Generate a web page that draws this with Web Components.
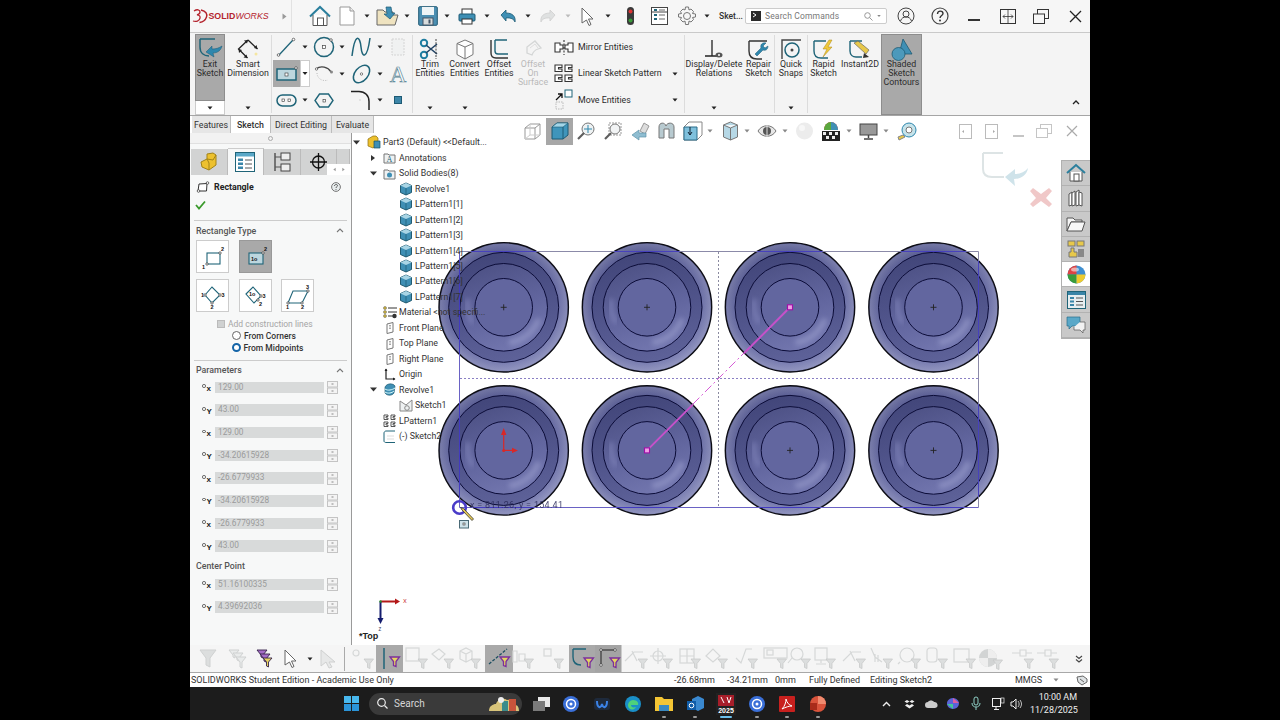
<!DOCTYPE html>
<html lang="en"><head><meta charset="utf-8"><title>SOLIDWORKS</title>
<style>html,body{margin:0;padding:0;background:#000;height:720px;overflow:hidden}</style></head>
<body><sw-app></sw-app>
<script>
const T='#1f6478',B='#3f8fb4',L='#a9d5e5',G='#7a7a7a',F='#c9cbcb';
const funnel=(x,y,c='#dcdede',s='#c4c6c6')=>`<path transform="translate(${x} ${y})" d="M0 0h9.5L6 4.5v5L3.5 8.5V4.5z" fill="${c}" stroke="${s}" stroke-width=".7"/>`;
const pf=(x,y)=>`<path transform="translate(${x} ${y})" d="M0 0h9.5L6 4.5v5L3.5 8.5V4.5z" fill="#e6d460" stroke="#7c2f9c" stroke-width="1.3"/>`;
const fg=(g)=>[26,24,`<g fill="none" stroke="#d6d8d8" stroke-width="1.2">${g}</g>`+funnel(14,12)];
const corner=`<path d="M2 2h17M2 2v12c0 2.5 1.5 4 4 4h3" fill="none" stroke="${T}" stroke-width="1.5"/>`;
const cube=(s=1)=>`<g transform="scale(${s})"><path d="M7 1l5.500 2.500v7L7 13l-5.500-2.500v-7z" fill="${B}" stroke="#155066" stroke-width=".9"/><path d="M1.500 3.500L7 6l5.500-2.500L7 1z" fill="${L}"/><path d="M7 6v7" stroke="#155066" stroke-width=".6"/></g>`;
const plane=`<path d="M4 3l6-1.500v9.500l-6 1.500z" fill="#fff" stroke="#777"/><path d="M7 4v5" stroke="#555" stroke-dasharray="1.500 1"/>`;
const num=(x,y,n)=>`<text x="${x}" y="${y}" font-family="Liberation Sans" font-weight="700" font-size="5.500" fill="#111">${n}</text>`;
const I={
dd:[6,4,'<path d="M.5.500h5L3 3.500z" fill="#222"/>'],
ddf:[6,4,'<path d="M.5.500h5L3 3.500z" fill="#bbb"/>'],
ddw:[6,4,'<path d="M.5.500h5L3 3.500z" fill="#888"/>'],
arr:[5,7,'<path d="M.5.500l4 3-4 3z" fill="#999"/>'],
logo:[16,16,`<path d="M2 3c3-2 6-1.500 6 1 0 1.600-1.400 2.400-3 2.800 2.300.2 3.500 1.400 3 3.400C7.500 13 4 14 1 13" fill="none" stroke="#b4232d" stroke-width="1.300"/><path d="M9 2c5 1 6.500 4 5.500 7s-3.500 5-7 5.500" fill="none" stroke="#b4232d" stroke-width="1.400"/>`],
home:[22,22,`<path d="M1 11.500L11 2l10 9.500" fill="none" stroke="#2b7f9d" stroke-width="2"/><path d="M4 10v10.500h14V10" fill="#fff" stroke="#555"/><rect x="8.500" y="13" width="6" height="7.500" fill="#fff" stroke="#555"/>`],
file:[16,20,`<path d="M1 1h10l4 4v14H1z" fill="#fff" stroke="#999"/><path d="M11 1v4h4" fill="#eee" stroke="#999"/>`],
open:[22,20,`<path d="M1 4h6l2 2h8v3L22 9l-3 10H1z" fill="#efe3c0" stroke="#666"/><path d="M10 1h5l1 6h3l-5 6-6-5h3z" fill="${B}" stroke="#1d5a74" stroke-width=".7"/>`],
save:[20,20,`<rect x=".7" y=".7" width="18.600" height="18.600" rx="1" fill="#4c8fb2" stroke="#225a75"/><rect x="4" y="1" width="12" height="8" fill="#eef4f6"/><rect x="5" y="12" width="10" height="7" fill="#d8dcdc" stroke="#456"/><rect x="10.500" y="13.500" width="2" height="4" fill="#456"/>`],
print:[18,17,`<rect x="4" y="1" width="10" height="6" fill="#fff" stroke="#333"/><rect x="1" y="6" width="16" height="7" rx="1" fill="#3f8fb4" stroke="#1d5a74"/><rect x="4" y="11" width="10" height="5" fill="#fff" stroke="#333"/>`],
undo:[18,14,`<path d="M2 6l5-5v3c6 0 10 3 9 9-1-3-4-4.500-9-4v3z" fill="#3f8fb4" stroke="#1d5a74" stroke-width=".8"/>`],
redo:[18,14,`<path d="M16 6l-5-5v3C5 4 1 7 2 13c1-3 4-4.500 9-4v3z" fill="#dfe1e1" stroke="#cfcfcf" stroke-width=".8"/>`],
cursor:[13,19,`<path d="M1 1l11 11H7.500l2.500 5.500-2 1L5.500 13 1 16z" fill="#fff" stroke="#666"/>`],
cursorf:[18,20,`<path d="M2 1l14 12H10l3 5-3 1-3-6-5 4z" fill="#e7e8e8" stroke="#cfd0d0"/>`],
traffic:[7,18,`<rect width="7" height="18" rx="3.500" fill="#3a3a3a"/><circle cx="3.500" cy="4.500" r="2" fill="#d33"/><circle cx="3.500" cy="13.500" r="2" fill="#3a9c3a"/>`],
opts:[17,18,`<rect x=".5" y=".5" width="16" height="17" fill="#fff" stroke="#444"/><path d="M1 5h15" stroke="#444"/><g fill="${T}"><rect x="3" y="2" width="3" height="2"/><rect x="3" y="7" width="3" height="2"/><rect x="3" y="11" width="3" height="2"/></g><path d="M8 3h6M8 8h6M8 12h6" stroke="#666"/>`],
gear:[20,20,`<circle cx="10" cy="10" r="3.500" fill="none" stroke="#777"/><path d="M8.500 1h3l.5 3 2-1 2.500 2.500-1 2 3 .5v3l-3 .5 1 2L14 16l-2-1-.5 3.500h-3L8 15l-2 1-2.500-2.500 1-2-3-.5V8l3-.5-1-2L6 3l2 1z" fill="none" stroke="#777"/>`],
term:[10,10,`<rect width="10" height="10" fill="#2a2a2a"/><path d="M2 2l3 2-3 2" fill="none" stroke="#fff"/>`],
mag:[9,9,`<circle cx="3.500" cy="3.500" r="2.800" fill="none" stroke="#999"/><path d="M5.500 5.500L8.500 8.500" stroke="#999"/>`],
user:[18,18,`<circle cx="9" cy="9" r="8" fill="none" stroke="#444"/><circle cx="9" cy="7" r="3" fill="none" stroke="#444"/><path d="M3.500 14c1-3 3-4 5.500-4s4.500 1 5.500 4" fill="none" stroke="#444"/>`],
help:[18,18,`<circle cx="9" cy="9" r="8" fill="none" stroke="#444" stroke-width="1.200"/><path d="M6.500 7c0-4 5.500-3.500 5.500-.500 0 2-3 2-3 4.500" fill="none" stroke="#333" stroke-width="1.400"/><circle cx="9" cy="13.500" r="1" fill="#333"/>`],
min:[12,3,`<rect width="12" height="2" fill="#333"/>`],
tile:[16,15,`<rect x=".5" y=".5" width="15" height="14" fill="none" stroke="#333"/><path d="M3 7.500h10M3 7.500l2-2M3 7.500l2 2M13 7.500l-2-2M13 7.500l-2 2M8 .5v14" stroke="#333" stroke-width=".8" fill="none"/>`],
rest:[16,15,`<rect x="4.500" y=".5" width="11" height="9" fill="none" stroke="#333"/><rect x=".5" y="5" width="11" height="9.500" fill="#f6f6f6" stroke="#333"/>`],
close:[13,13,`<path d="M1 1l11 11M12 1L1 12" stroke="#222" stroke-width="1.300"/>`],
exit:[25,24,`<path d="M2 2h15M2 2v8c0 6 4 9 9 9" fill="none" stroke="${T}" stroke-width="1.500"/><path d="M24 9c-1 4-4 7-9 7l1 4-8-5 6-6v3c4 0 7-1 10-3z" fill="#2f87ad" stroke="#1d5a74" stroke-width=".5"/>`],
smart:[24,22,`<path d="M12 2L2.500 11l9 9M12 2l9.500 9" fill="none" stroke="#222" stroke-width="1.300"/><path d="M12 2l-4 .5 3 3zM2.500 11l.5 4 3-3zM11.500 20l-4-.5 3-3zM21.500 11l-1-4-2.500 3z" fill="#222"/><circle cx="20" cy="16" r="1.500" fill="#f5e6a0"/>`],
line:[20,20,`<path d="M3 18L17 3" stroke="${T}" stroke-width="1.300"/><circle cx="2.500" cy="18" r="1.300" fill="#fff" stroke="#444" stroke-width=".7"/><circle cx="17.500" cy="2.500" r="1.300" fill="#fff" stroke="#444" stroke-width=".7"/>`],
circ:[22,22,`<circle cx="11" cy="11" r="9.500" fill="none" stroke="${T}" stroke-width="1.500"/><rect x="9.500" y="9.500" width="3" height="3" fill="#fff" stroke="#444" stroke-width=".7"/><circle cx="18" cy="4" r="1.300" fill="#fff" stroke="#444" stroke-width=".7"/>`],
spline:[20,19,`<path d="M1 18C4-6 9-2 10 9c1 11 6 13 9-9" fill="none" stroke="${T}" stroke-width="1.500"/>`],
ghost:[14,18,`<rect x="1" y="1" width="12" height="16" fill="#f0f1f1" stroke="#ccc" stroke-dasharray="2 1"/>`],
rectsel:[27,27,`<rect width="27" height="27" fill="#a9a9a9"/><rect x="4" y="9" width="19" height="11" fill="#bcd6de" stroke="${T}" stroke-width="1.500"/><rect x="12" y="13" width="3" height="3" fill="#fff" stroke="#333" stroke-width=".6"/><circle cx="23" cy="8" r="1.300" fill="#fff" stroke="#333" stroke-width=".6"/>`],
rectdd:[10,27,`<rect x=".5" y=".5" width="9" height="26" fill="#fff" stroke="#ccc"/><path d="M2.500 12h5L5 15z" fill="#222"/>`],
arc:[19,18,`<path d="M1 4C6 0 13 2 16 7" fill="none" stroke="#444" stroke-width="1.300"/><path d="M2 8c0 5 5 9 11 7" fill="none" stroke="#bbb" stroke-dasharray="1 1.500"/><circle cx="1.500" cy="4" r="1.200" fill="#fff" stroke="#333" stroke-width=".6"/><circle cx="16.500" cy="7" r="1.500" fill="#888"/>`],
ell:[21,20,`<ellipse cx="10.500" cy="10" rx="6.500" ry="10" transform="rotate(40 10.500 10)" fill="none" stroke="${T}" stroke-width="1.500"/><circle cx="10.500" cy="10" r="1.200" fill="#fff" stroke="#333" stroke-width=".6"/>`],
atext:[20,20,`<text x="10" y="18" text-anchor="middle" font-family="Liberation Serif" font-size="23" fill="#fff" stroke="#5c8797" stroke-width=".7">A</text>`],
slot:[21,13,`<rect x="1" y="1" width="19" height="11" rx="5.500" fill="none" stroke="${T}" stroke-width="1.500"/><rect x="6" y="5" width="2.500" height="2.500" fill="#fff" stroke="#333" stroke-width=".6"/><rect x="12" y="5" width="2.500" height="2.500" fill="#fff" stroke="#333" stroke-width=".6"/>`],
poly:[20,15,`<path d="M5.500 1h9l4.500 6.500-4.500 6.500h-9L1 7.500z" fill="none" stroke="${T}" stroke-width="1.400"/><rect x="9" y="6.500" width="2.500" height="2.500" fill="#fff" stroke="#333" stroke-width=".6"/>`],
fillet:[20,20,`<path d="M0 1.500h8c6 0 10 4 10 10V20" fill="none" stroke="#222" stroke-width="1.500"/><circle cx="9" cy="10" r=".8" fill="#ccc"/>`],
point:[8,8,`<rect x=".5" y=".5" width="7" height="7" fill="#3d86a8" stroke="#1d5a74"/>`],
trim:[22,22,`<circle cx="5" cy="5" r="3.200" fill="none" stroke="#1f7da0" stroke-width="2"/><circle cx="5" cy="17" r="3.200" fill="none" stroke="#1f7da0" stroke-width="2"/><path d="M7 7l11 9M7 15l11-9" stroke="#246" stroke-width="1.600"/><path d="M17 1v20" stroke="#444" stroke-dasharray="2 1.200"/>`],
conv:[20,21,`<path d="M10 1l8 3.500v11L10 20l-8-4.500v-11z" fill="#fff" stroke="#777"/><path d="M2 4.500L10 8l8-3.500M10 8v12" fill="none" stroke="#777"/>`],
offset:[20,20,`<path d="M2 1v13c0 3 2 5 5 5h12" fill="none" stroke="#333" stroke-width="1.400"/><path d="M6 1h12M6 1v11c0 2 1 3 3 3h10" fill="none" stroke="#1f6478" stroke-width="1.400"/>`],
offsurf:[18,19,`<path d="M3 7l8-6 6 7-3 1c-3 1-5 3-6 6L3 13z" fill="none" stroke="#d4d6d6" stroke-width="1.300"/><path d="M6 8l5-4 3 4" fill="none" stroke="#ddd"/>`],
mirror:[20,15,`<path d="M1 3h5v2h3v4H6v3H1z" fill="#fff" stroke="#333" stroke-width="1.100"/><path d="M19 3h-5v2h-3v4h3v3h5z" fill="#fff" stroke="#333" stroke-width="1.100"/><path d="M10 0v15" stroke="#222" stroke-dasharray="2 1.500"/>`],
lpat:[20,19,`<g fill="#fff" stroke="#333" stroke-width="1.100"><path d="M1 1h7v2.500H4.500V5H8v2.500H1z"/><path d="M11 1h7v2.500h-3.500V5H18v2.500h-7z"/><path d="M1 11h7v2.500H4.500V15H8v2.500H1z"/><path d="M11 11h7v2.500h-3.500V15H18v2.500h-7z"/></g>`],
move:[18,22,`<rect x="10" y="1" width="7" height="7" fill="#fff" stroke="${T}"/><path d="M1 11l6-6M3 5h4v4" fill="none" stroke="#111" stroke-width="1.300"/><rect x="1" y="13" width="7" height="7" fill="none" stroke="#bbb" stroke-dasharray="1.500 1"/>`],
disp:[20,20,`<path d="M8 1v16M1 17h16" stroke="#222" stroke-width="1.300"/><ellipse cx="15" cy="16" rx="3.500" ry="2.500" fill="#555"/><circle cx="15" cy="16" r="1" fill="#fff"/>`],
repair:[21,21,`<path d="M1 2h18M1 2v10c0 5 3 8 8 8h5" fill="none" stroke="#333" stroke-width="1.400"/><path d="M18 4l-3 3 2 2 3-2c0 4-3 5-5 4l-6 6-2-2 6-6c-1-3 1-6 5-5z" fill="#2f87ad" stroke="#1d5a74" stroke-width=".5"/>`],
snaps:[21,21,`<path d="M1 20V1h19" fill="none" stroke="#444" stroke-width="1.400"/><circle cx="11" cy="11" r="7" fill="none" stroke="${T}" stroke-width="1.500"/><circle cx="11" cy="11" r="1.500" fill="#444"/>`],
rapid:[21,21,`<path d="M1 2h12M1 2v10c0 5 3 7 7 7h7" fill="none" stroke="${T}" stroke-width="1.400"/><path d="M16 1l-6 9h4l-4 8 9-10h-4l4-7z" fill="#efc93a" stroke="#a9871b" stroke-width=".5"/>`],
i2d:[22,20,`<path d="M1 2h12M1 2v10c0 4 3 6 6 6h6" fill="none" stroke="${T}" stroke-width="1.400"/><path d="M5 4l4-2 11 9-3 4z" fill="#e7c84a" stroke="#555" stroke-width=".6"/><path d="M15 14l5 4-6 1z" fill="#333"/>`],
shaded:[22,23,`<path d="M12 1l9 15H8z" fill="#3f8fb4" stroke="#1d5a74" stroke-width=".8"/><circle cx="7.500" cy="16" r="6.500" fill="#4c99bb" stroke="#1d5a74" stroke-width=".8"/>`],
up:[8,5,`<path d="M1 4l3-3 3 3" fill="none" stroke="#222" stroke-width="1.300"/>`],
upg:[8,5,`<path d="M1 4l3-3 3 3" fill="none" stroke="#777" stroke-width="1.100"/>`],
wire:[17,17,`<path d="M1 5l5-4h10v11l-5 4H1zM1 5h10v11M11 5l5-4" fill="none" stroke="#999"/><path d="M1 16l5-4h10M6 1v11" fill="none" stroke="#ccc"/>`],
shadedcube:[27,27,`<rect width="27" height="27" fill="#a7a7a7"/><path d="M6 9l5-4h11v12l-5 4H6z" fill="#3f95bb" stroke="#1d5a74"/><path d="M6 9h11l5-4H11z" fill="#a4d6e8" stroke="#1d5a74" stroke-width=".6"/><path d="M17 9v12" stroke="#1d5a74"/>`],
zfit:[18,18,`<circle cx="11" cy="7" r="6" fill="#eef2f3" stroke="#777"/><path d="M7 11l-6 6" stroke="#5e5e5e" stroke-width="2.200"/><path d="M11 3v8M7 7h8" stroke="#2f87ad"/>`],
zarea:[18,18,`<rect x="5" y="1" width="12" height="12" fill="none" stroke="#999" stroke-dasharray="2 1"/><circle cx="11" cy="7" r="5" fill="#f2f4f5" stroke="#777"/><path d="M7 11l-6 6" stroke="#5e5e5e" stroke-width="2.200"/>`],
prev:[19,18,`<path d="M13 1l5 3-4 8-5-3z" fill="#ddd" stroke="#999"/><path d="M1 13l7-5v3h7v4H8v3z" fill="#8fbdd1" stroke="#5e93a9" stroke-width=".7"/>`],
sect:[19,18,`<path d="M2 16V5c0-5 6-5 7-1 1-4 8-4 8 1v11h-5V7H7v9z" fill="#b8cad0" stroke="#777"/>`],
vorient:[20,20,`<path d="M1 6l5-5h13v13l-5 5H1z" fill="#fff" stroke="#888"/><path d="M1 6h13v13H1z" fill="#7fc0dc" stroke="#2a6d8a"/><path d="M7 6v8M5 11l2 3 2-3" fill="none" stroke="#123"/>`],
dstyle:[17,20,`<path d="M8.500 1l7 3v12l-7 3-7-3V4z" fill="#b6d8e6" stroke="#777"/><path d="M8.500 7v12M1.500 4l7 3 7-3" fill="#eef6fa" stroke="#777"/>`],
eye:[20,14,`<path d="M1 7c4-7 14-7 18 0-4 7-14 7-18 0z" fill="#e7e7e7" stroke="#777"/><circle cx="10" cy="7" r="4" fill="#555"/><path d="M10 1v12" stroke="#ddd"/>`],
ball:[19,20,`<circle cx="9.500" cy="10" r="8.500" fill="#ececec"/><circle cx="7" cy="7" r="3" fill="#f7f7f7"/>`],
appear:[20,21,`<path d="M3 9a7 8 0 0 1 14 0z" fill="#d44"/><path d="M10 1a7 8 0 0 1 7 8h-7z" fill="#3f8fb4"/><path d="M3 9a7 8 0 0 1 7-8v8z" fill="#5aa83f"/><g fill="#222"><rect x="1" y="10" width="18" height="10"/></g><g fill="#eee"><rect x="2" y="11" width="3" height="3"/><rect x="8" y="11" width="3" height="3"/><rect x="14" y="11" width="3" height="3"/><rect x="5" y="15" width="3" height="3"/><rect x="11" y="15" width="3" height="3"/></g>`],
mon:[19,17,`<rect x="1" y="1" width="17" height="11" fill="#999" stroke="#444"/><path d="M9.500 12v3M5 16h9" stroke="#444" stroke-width="1.500"/>`],
tape:[20,20,`<circle cx="12" cy="9" r="7" fill="#c6e3ea" stroke="#2f87ad"/><circle cx="12" cy="9" r="3" fill="#fff" stroke="#777"/><path d="M6 14l-5 2 1 3 6-3z" fill="#e7c84a" stroke="#888"/>`],
wl:[13,15,`<rect x=".5" y=".5" width="12" height="14" fill="#fff" stroke="#bbb"/><path d="M3 7.500l2-1.500v3z" fill="#aaa"/>`],
wr:[13,15,`<rect x=".5" y=".5" width="12" height="14" fill="#fff" stroke="#bbb"/><path d="M10 7.500l-2-1.500v3z" fill="#aaa"/>`],
wm:[11,2,`<rect width="11" height="2" fill="#c5c5c5"/>`],
wrest:[16,14,`<rect x="4.500" y=".5" width="11" height="9" fill="none" stroke="#c5c5c5"/><rect x=".5" y="4.500" width="11" height="9" fill="#fff" stroke="#c5c5c5"/>`],
wclose:[12,12,`<path d="M1 1l10 10M11 1L1 11" stroke="#aaa" stroke-width="1.200"/>`],
tpart:[20,20,`<path d="M2 10l6-3V2l6-1 3 2v10l-7 5-7-3z" fill="#edc12e" stroke="#a28318"/><path d="M8 7l6 1 3-5M8 7l2 4v7" fill="none" stroke="#a28318"/>`],
tpm:[20,20,`<rect x=".5" y=".5" width="19" height="19" fill="#fff" stroke="#1f6478"/><rect x="1" y="1" width="18" height="3.500" fill="#5aa8c8"/><g fill="#3a85a8"><rect x="3" y="6.500" width="5" height="2.500"/><rect x="3" y="10.500" width="5" height="2.500"/><rect x="3" y="14.500" width="5" height="2.500"/></g><path d="M10 8h7M10 12h7M10 16h7" stroke="#555"/>`],
tcfg:[19,20,`<path d="M3 1v18" stroke="#555" stroke-width="1.500"/><path d="M3 5h6M3 15h6" stroke="#555" stroke-width="1.200"/><rect x="9" y="1" width="9" height="7" fill="#eee" stroke="#444"/><rect x="9" y="12" width="9" height="7" fill="#eee" stroke="#444"/>`],
tdim:[17,18,`<circle cx="8.500" cy="9" r="6" fill="none" stroke="#111" stroke-width="1.300"/><path d="M8.500 0v18M0 9h17" stroke="#111" stroke-width="1.300"/>`],
trect:[12,12,`<path d="M2 3l8-.5-.5 7.500H1z" fill="#fff" stroke="#333"/><circle cx="10.500" cy="2" r="1.300" fill="#fff" stroke="#333" stroke-width=".7"/><circle cx="1.500" cy="10" r="1.300" fill="#fff" stroke="#333" stroke-width=".7"/>`],
qhelp:[10,10,`<circle cx="5" cy="5" r="4.400" fill="#e7eced" stroke="#777"/><path d="M3.500 4c0-2 3-2 3-.3 0 1-1.500 1-1.500 2.300M5 7.200v.8" fill="none" stroke="#555"/>`],
check:[11,10,`<path d="M1 5l3 3.500L10 1.500" fill="none" stroke="#3a9a2c" stroke-width="1.800"/>`],
rt1:[24,24,`<rect x="6" y="8" width="13" height="11" fill="none" stroke="${T}" stroke-width="1.100"/><circle cx="6" cy="19" r="1.200" fill="#fff" stroke="#333" stroke-width=".7"/><circle cx="19" cy="8" r="1.200" fill="#fff" stroke="#333" stroke-width=".7"/>`+num(1,24,1)+num(20,6,2)],
rt2:[24,24,`<rect x="6" y="8" width="14" height="11" fill="#bcd6de" stroke="${T}" stroke-width="1.100"/><circle cx="20" cy="8" r="1.200" fill="#fff" stroke="#333" stroke-width=".7"/>`+num(8,16,'1o')+num(21,6,2)],
rt3:[24,24,`<path d="M4 11l7-8 8 8-8 8z" fill="none" stroke="${T}" stroke-width="1.100"/><circle cx="4" cy="11" r="1.200" fill="#fff" stroke="#333" stroke-width=".7"/><circle cx="19" cy="11" r="1.200" fill="#fff" stroke="#333" stroke-width=".7"/><circle cx="11" cy="19" r="1.200" fill="#fff" stroke="#333" stroke-width=".7"/>`+num(0,13,1)+num(20.500,13,3)+num(9.500,25,2)],
rt4:[24,24,`<path d="M3 10l7-7 8 9-7 7z" fill="none" stroke="${T}" stroke-width="1.100"/><circle cx="18" cy="12" r="1.200" fill="#fff" stroke="#333" stroke-width=".7"/><circle cx="15" cy="16" r="1.200" fill="#fff" stroke="#333" stroke-width=".7"/>`+num(6,12,'1o')+num(19.500,14,3)+num(16,22,2)],
rt5:[24,24,`<path d="M2 19L7 7h15l-6 12z" fill="none" stroke="${T}" stroke-width="1.100"/><circle cx="2" cy="19" r="1.200" fill="#fff" stroke="#333" stroke-width=".7"/><circle cx="16" cy="19" r="1.200" fill="#fff" stroke="#333" stroke-width=".7"/><circle cx="22" cy="7" r="1.200" fill="#fff" stroke="#333" stroke-width=".7"/>`+num(0,25,1)+num(15,25,2)+num(20,5,3)],
spin:[11,13,`<rect x=".5" y=".5" width="10" height="5.500" fill="#f4f4f4" stroke="#c4c4c4"/><rect x=".5" y="7" width="10" height="5.500" fill="#f4f4f4" stroke="#c4c4c4"/><path d="M4.500 3h2M4.500 10h2" stroke="#888"/>`],
tann:[13,13,`<path d="M1 3h4l1 1h6v8H1z" fill="#eef1f2" stroke="#777"/><text x="6.500" y="11" text-anchor="middle" font-family="Liberation Serif" font-size="8" fill="${T}">A</text>`],
tbod:[13,13,`<path d="M1 3h4l1 1h6v8H1z" fill="#eef1f2" stroke="#777"/><circle cx="6.500" cy="8" r="2.500" fill="${B}"/>`],
tcube:[13,14,cube()],
tpart3:[14,14,`<path d="M1 4l5-3h3l2 2v7l-5 3-5-2z" fill="#edc12e" stroke="#8c6f12" stroke-width=".7"/><path d="M7 6h6v7H7z" fill="${B}" stroke="#155066" stroke-width=".7"/>`],
tmat:[15,13,`<path d="M5 2h9M5 6h9M5 10h5" stroke="#333"/><g fill="#cdb33a" stroke="#555" stroke-width=".5"><circle cx="2" cy="2" r="1.500"/><circle cx="2" cy="6" r="1.500"/><circle cx="2" cy="10" r="1.500"/></g><circle cx="11.500" cy="10" r="2.200" fill="#333"/>`],
tplane:[13,13,plane],
torig:[13,13,`<path d="M3 1v10h9" fill="none" stroke="#222" stroke-width="1.200"/><path d="M1.500 3L3 .5 4.500 3zM10 9.500l2.500 1.500L10 12.500z" fill="#222"/>`],
trev:[13,13,`<path d="M2 4c2-4 8-4 10-1l-1 7c-2 3-7 3-9 0z" fill="#3f8fb4" stroke="#155066" stroke-width=".6"/><path d="M2 6c3 2 7 1 10-1M2 9c3 2 7 1 9-1" stroke="#dff" fill="none"/>`],
tsk:[14,13,`<path d="M1 2l6 4 6-5v11H1z" fill="#eef1f2" stroke="#888"/><circle cx="8" cy="9" r="2.300" fill="none" stroke="#888"/>`],
tlp:[14,13,`<g fill="#fff" stroke="#444" stroke-width=".9"><path d="M1 1h4v1.500H3V4h2v1.500H1z"/><path d="M8 1h4v1.500h-2V4h2v1.500H8z"/><path d="M1 8h4v1.500H3V11h2v1.500H1z"/><path d="M8 8h4v1.500h-2V11h2v1.500H8z"/></g>`],
tsk2:[13,13,`<path d="M12 1H3c-1 0-2 1-2 2v8c0 1 1 1.500 2 1.500h9" fill="#fff" stroke="#1f6478"/><path d="M4 6h7M4 9h7" stroke="#ddd"/>`],
exparr:[6,6,`<path d="M1 0l4 3-4 3z" fill="#333"/>`],
expdn:[7,5,`<path d="M0 .5h7L3.500 4.500z" fill="#333"/>`],
pHome:[20,20,`<path d="M1 10L10 2l9 8" fill="none" stroke="#2b7f9d" stroke-width="2"/><path d="M4 9v9h12V9" fill="#fff" stroke="#555"/><rect x="8" y="11" width="5" height="7" fill="#fff" stroke="#555"/>`],
pLib:[18,18,`<g fill="#fff" stroke="#555"><path d="M2 5l3-2v13l-3 1z"/><path d="M5 4l3-2v14l-3 1z"/><path d="M9 3l3-2v15l-3 1z"/><path d="M12 3l3 1v13l-3-1z"/></g>`],
pFold:[20,16,`<path d="M1 2h6l2 2h7v2H5L1 15z" fill="#f5f5f5" stroke="#555"/><path d="M5 6h14l-3 9H1z" fill="#f7f7f7" stroke="#555"/>`],
pVP:[18,18,`<rect x="1" y="1" width="7" height="5" fill="#e7c84a" stroke="#777"/><rect x="10" y="1" width="7" height="5" fill="#e7c84a" stroke="#777"/><path d="M4 8h3v4h3v5H2v-5h2z" fill="#e7c84a" stroke="#777"/><rect x="11" y="9" width="6" height="8" fill="#888"/>`],
pApp:[19,19,`<circle cx="9.500" cy="9.500" r="9" fill="#3f8fd0"/><path d="M9.500.5a9 9 0 0 0-9 9h9z" fill="#d44"/><path d="M.5 9.500a9 9 0 0 0 9 9v-9z" fill="#3a9c3a"/><path d="M9.500 9.500h9a9 9 0 0 1-9 9z" fill="#eecb2e"/><ellipse cx="8" cy="4.500" rx="4" ry="2" fill="#fff" opacity=".55"/>`],
pCP:[19,18,`<rect x=".5" y=".5" width="18" height="17" fill="#e7eef0" stroke="#1f6478"/><rect x="1" y="1" width="17" height="3" fill="#3a85a8"/><g fill="#3a85a8"><rect x="3" y="6" width="4" height="2"/><rect x="3" y="9.500" width="4" height="2"/><rect x="3" y="13" width="4" height="2"/></g><path d="M9 7h7M9 10.500h7M9 14h7" stroke="#555"/>`],
pChat:[20,18,`<path d="M1 1h13v9H6l-3 3v-3H1z" fill="#5aa8c8" stroke="#2a6d8a" stroke-width=".7"/><path d="M14 6h5v8h-2v3l-3-3H8v-3" fill="#f2f2f2" stroke="#555" stroke-width=".7"/>`],
ffun1:[19,20,`<path d="M1 1h16l-6 8v9l-4-2V9z" fill="#dcdede" stroke="#cfd1d1"/>`],
ffun2:[19,20,`<g fill="#e9ebeb" stroke="#cfd1d1"><path d="M1 1h10L7 6v3L5 8V6z"/><path d="M5 4h10l-4 5v3l-2-1V9z"/><path d="M8 8h10l-4 5v6l-2-1v-5z"/></g>`],
ffun3:[17,19,`<g stroke="#35224a" stroke-width=".9"><path d="M1 1h10L7 6v3L5 8V6z" fill="#a46cc6"/><path d="M4 5h10l-4 5v3l-2-1v-2z" fill="#a46cc6"/><path d="M7 9h9l-3.500 4v5l-2-1v-4z" fill="#e6d460"/></g>`],
fsel1:[27,27,`<rect width="27" height="27" fill="#a9a9a9"/><path d="M8 3v21" stroke="${T}" stroke-width="1.500"/>`+pf(14,12)],
fsel2:[28,27,`<rect width="28" height="27" fill="#a9a9a9"/><path d="M4 19L22 4" stroke="#1c4e60" stroke-width="1.300" stroke-dasharray="3 1.500"/>`+pf(15,12)],
fsel3:[27,27,`<rect width="27" height="27" fill="#a9a9a9"/><path d="M4 4h13M4 4v8c0 5 3 8 8 8" fill="none" stroke="${T}" stroke-width="1.400"/>`+pf(15,13)],
fsel4:[27,27,`<rect width="26.500" height="27" fill="#a4a4a4"/><path d="M6 5h14M6 5v15" fill="none" stroke="#222" stroke-width="1"/><circle cx="6" cy="5" r="1.300" fill="#fff" stroke="#222" stroke-width=".6"/><circle cx="6" cy="20" r="1.300" fill="#fff" stroke="#222" stroke-width=".6"/><circle cx="20" cy="5" r="1.300" fill="#fff" stroke="#222" stroke-width=".6"/>`+pf(15,13)],
sep:[1,24,`<rect width="1" height="24" fill="#aaa"/>`],
chev:[8,8,`<path d="M1 1l3 2.500L7 1M1 4.500L4 7l3-2.500" fill="none" stroke="#444" stroke-width="1.100"/>`],
fstat:[12,11,`<path d="M1 2l6-1 4 3v3l-5 3-4-3z" fill="#dfe3e5" stroke="#666"/><path d="M4 4l4 3" stroke="#666"/>`],
win:[15,15,`<rect width="7" height="7" fill="#48b8ee"/><rect x="8" width="7" height="7" fill="#48b8ee"/><rect y="8" width="7" height="7" fill="#2b94d8"/><rect x="8" y="8" width="7" height="7" fill="#2b94d8"/>`],
smag:[11,11,`<circle cx="4.500" cy="4.500" r="3.800" fill="none" stroke="#eee" stroke-width="1.200"/><path d="M7.500 7.500L10.500 10.500" stroke="#eee" stroke-width="1.200"/>`],
doodle:[32,17,`<path d="M1 16c0-5 4-7 7-7 1-4 7-7 11-4 4-1 8 1 8 5 3 0 4 3 4 6z" fill="#d8c47a"/><rect x="14" y="6" width="6" height="10" fill="#3b8b8b"/><rect x="21" y="4" width="7" height="12" fill="#c9543b"/><circle cx="13" cy="5" r="3" fill="#eee"/>`],
task:[17,14,`<rect x="5" y="0" width="12" height="10" fill="#e8e8e8"/><rect x="0" y="4" width="12" height="10" fill="#7a7a7a"/>`],
t1:[16,16,`<circle cx="8" cy="8" r="8" fill="#3a6fd8"/><circle cx="8" cy="8" r="4.500" fill="none" stroke="#fff" stroke-width="1.500"/><circle cx="8" cy="8" r="1.500" fill="#fff"/>`],
t2:[16,12,`<rect width="16" height="12" rx="3" fill="#1e2a3c"/><path d="M3 3c0 7 4 8 5 3 1 5 5 4 5-3" fill="none" stroke="#3b82e6" stroke-width="2"/>`],
edge:[16,16,`<circle cx="8" cy="8" r="8" fill="#1a8fc8"/><path d="M5 13c-3-2-3-8 3-9 4 0 6 3 5 5H6c0 2 2 3 5 2-2 3-4 3-6 2z" fill="#4ed27b"/>`],
fold:[18,15,`<path d="M0 1h7l2 2h9v12H0z" fill="#f4c534"/><rect x="4" y="9" width="10" height="6" fill="#3a89c0"/>`],
outl:[17,16,`<path d="M5 3l6-3 6 3v9l-6 3-6-3z" fill="#3a89d0"/><rect y="5" width="9" height="9" fill="#0f5ca8"/><circle cx="4.500" cy="9.500" r="2.300" fill="none" stroke="#fff"/>`],
swapp:[20,22,`<rect width="20" height="22" fill="#222"/><rect x="2" y="2" width="16" height="11" fill="#a71e2a"/><text x="10" y="20" text-anchor="middle" font-family="Liberation Sans" font-size="7" font-weight="700" fill="#fff">2025</text><path d="M5 4l3 6M11 4l2 6 2-6" stroke="#fff" fill="none"/>`],
acro:[16,16,`<rect width="16" height="16" rx="1" fill="#c8201e"/><path d="M3 13c3-3 4-7 4-10 1 4 3 6 6 7-3 0-6 1-10 3z" fill="none" stroke="#fff"/>`],
ppt:[16,16,`<circle cx="8" cy="8" r="8" fill="#d9533b"/><path d="M8 8V0a8 8 0 0 1 8 8z" fill="#f08b6f"/><rect y="7" width="7" height="7" fill="#a82b1a"/>`],
caret:[9,6,`<path d="M1 5l3.500-3.500L8 5" fill="none" stroke="#eee" stroke-width="1.400"/>`],
tdb:[11,10,`<path d="M3 1l2.500 1.500L3 4 .5 2.500zM8 1l2.500 1.500L8 4 5.500 2.500zM3 5l2.500 1.500L8 5l2 1.500-4.500 3L1 6.500z" fill="#eee"/>`],
tcl:[12,8,`<path d="M3 8a3 3 0 0 1 0-6c1-2 5-2 6 0a3 3 0 0 1 1 6z" fill="#ccc"/>`],
tms:[12,11,`<path d="M6 0a6 5.500 0 1 1-.1 0z" fill="#5a63d8"/><path d="M6 0l6 5H6z" fill="#dd5f9f"/><path d="M0 6h6v5z" fill="#43c79a"/>`],
tmic:[8,14,`<rect x="2" y="0" width="4" height="8" rx="2" fill="none" stroke="#8fd0c6"/><path d="M0 6c0 3 2 4 4 4s4-1 4-4M4 10v3" fill="none" stroke="#8fd0c6"/>`],
tnet:[12,12,`<rect x=".5" y=".5" width="8" height="8" fill="none" stroke="#eee"/><path d="M4 8.500v3M2 11.500h5" stroke="#eee"/><rect x="9" y="0" width="3" height="5" fill="none" stroke="#eee" stroke-width=".7"/>`],
tvol:[11,10,`<path d="M1 3h2l3-3v10L3 7H1z" fill="none" stroke="#eee"/><path d="M8 2c1.500 2 1.500 4 0 6M10 1c2 3 2 5 0 8" fill="none" stroke="#eee" stroke-width=".8"/>`],
};
const glyph={a:`<circle cx="6" cy="6" r="3"/>`,b:`<rect x="2" y="1" width="13" height="13"/>`,c:`<path d="M2 7l7-5 6 5-6 6z"/>`,d:`<path d="M3 4l6-3 6 3v8l-6 3-6-3zM3 4l6 3 6-3M9 7v8"/>`,e:`<path d="M3 4h4v11H3zM9 7h6v7H9z"/>`,f:`<rect x="4" y="2" width="7" height="7"/>`,g:`<circle cx="9" cy="9" r="5"/><path d="M9 1v16M1 9h16"/>`,h:`<rect x="3" y="2" width="14" height="14"/><path d="M10 2v14M3 9h14"/>`,i:`<path d="M2 9l7-7 7 7-7 6z"/>`,j:`<path d="M2 11l5 5 5-14h6"/>`,k:`<rect x="1" y="1" width="23" height="10"/><rect x="4" y="3" width="6" height="5"/>`,l:`<circle cx="10" cy="7" r="6"/><path d="M5 11l-4 5"/>`,m:`<rect x="3" y="1" width="12" height="12"/><path d="M9 13v3M4 17h10"/>`,n:`<path d="M1 14L10 5h9M8 4l5 10"/>`,o:`<path d="M2 1l4 9 7 5M6 7v8M9 8v7"/>`,p:`<circle cx="10" cy="8" r="7"/><path d="M3 15l-2 2"/>`,q:`<rect x="3" y="1" width="10" height="14" rx="3"/>`,r:`<rect x="2" y="2" width="15" height="13"/>`,s:`<path d="M10 1a8 8 0 1 0 .1 0zM10 1v16M2 9h16"/>`,t:`<path d="M2 6h8M10 3h6v6h-6zM16 6h6"/>`};
for(const k in glyph)I['g'+k]=fg(glyph[k]);
I.gs[2]=`<circle cx="9" cy="11" r="9" fill="#d2d4d4"/><path d="M9 2a9 9 0 0 1 9 9H9zM9 11v9a9 9 0 0 1-9-9z" fill="#eee"/>`+funnel(14,13);

class SwIcon extends HTMLElement{connectedCallback(){if(this.shadowRoot)return;const d=I[this.getAttribute('name')];const r=this.attachShadow({mode:'open'});r.innerHTML=`<style>:host{display:block;flex:none;width:${d[0]}px;height:${d[1]}px}svg{display:block;overflow:visible}</style><svg width="${d[0]}" height="${d[1]}" viewBox="0 0 ${d[0]} ${d[1]}">${d[2]}</svg>`}}
customElements.define('sw-icon',SwIcon);

/* Lays a row out in flow: each item is placed by the gap before it. */
function strip(items,x0){let x=x0,o='';for(const it of items){
 if(it[1][0]==='#'){const [l,,w,html,css='']=it;o+=`<div style="flex:none;margin-left:${(l-x).toFixed(1)}px;width:${w}px;white-space:nowrap;${css}">${html}</div>`;x=l+w;}
 else{const [c,n,op,dy]=it;const w=I[n][0];const l=c-w/2;o+=`<sw-icon name="${n}" style="margin-left:${(l-x).toFixed(1)}px;${op?`opacity:${op};`:''}${dy?`margin-top:${dy}px;`:''}"></sw-icon>`;x=l+w;}
}return o}
const UI='Roboto,"Noto Sans",sans-serif';

class SwTitlebar extends HTMLElement{connectedCallback(){this.attachShadow({mode:'open'}).innerHTML=`<style>:host{display:flex;align-items:center;height:33px;background:#f6f6f6;border-bottom:1px solid #c9c9c9;box-sizing:border-box;font:9px ${UI};color:#333}.lg{font:700 8.800px "Liberation Sans",sans-serif;color:#b4232d}.lg i{font-weight:400}.box{display:flex;align-items:center;height:16px;border:1px solid #ccc;background:#fff;box-sizing:border-box;border-radius:2px;color:#777;font-size:8.500px;letter-spacing:.15px}</style>`+strip([
[200,'logo'],[208.500,'#',62,'<span class="lg">SOLID<i>WORKS</i></span>'],[284,'arr'],[290.500,'#',1,'','height:33px;background:#e2e2e2'],
[320,'home'],[347,'file'],[367,'dd'],[387,'open'],[407,'dd'],[428,'save'],[447,'dd'],[467,'print'],[487,'dd'],[508,'undo'],[528,'dd'],[548,'redo'],[568,'ddf'],[587,'cursor'],[608,'dd'],[630,'traffic'],[659,'opts'],[687,'gear'],[707,'dd'],
[719,'#',22,'Sket...','font-weight:500;font-size:8.500px'],[745,'#',142,`<div class="box"><sw-icon name="term" style="margin:0 4px 0 5px"></sw-icon><span style="flex:1">Search Commands</span><sw-icon name="mag" style="margin-right:3px"></sw-icon><sw-icon name="ddw" style="margin-right:4px;transform:scale(.7)"></sw-icon></div>`],
[906,'user'],[940,'help'],[974,'min',0,8],[1008,'tile'],[1041,'rest'],[1075,'close']],190)}}
customElements.define('sw-titlebar',SwTitlebar);

class SwRbtn extends HTMLElement{connectedCallback(){const g=n=>this.getAttribute(n);const active=this.hasAttribute('active'),fade=this.hasAttribute('faded'),dd=this.hasAttribute('dd');
this.attachShadow({mode:'open'}).innerHTML=`<style>:host{display:flex;flex-direction:column;align-items:center;flex:none;width:${g('w')}px;height:81px;box-sizing:border-box;font:8.800px/9px ${UI};color:${fade?'#b9b9b9':'#2c2c2c'};text-align:center}
.top{display:flex;flex-direction:column;align-items:center;width:100%;height:${g('box')||81}px;box-sizing:border-box;${active?'background:#a9a9a9;border:1px solid #8d8d8d;':''}}.ic{height:22px;margin-top:${active?3:4}px;display:flex;align-items:center;justify-content:center}.lb{margin-top:0}.dd{height:14px;display:flex;align-items:center;justify-content:center;width:100%;box-sizing:border-box;${g('box')&&active?'background:#fff;border:1px solid #ccc;border-top:0':''}}</style>
<div class="top"><div class="ic"><sw-icon name="${g('icon')}"></sw-icon></div><div class="lb"><slot></slot></div></div>${g('box')?`<div class="dd">${dd?'<sw-icon name="dd"></sw-icon>':''}</div>`:''}`}}
customElements.define('sw-rbtn',SwRbtn);

class SwRibbon extends HTMLElement{connectedCallback(){this.attachShadow({mode:'open'}).innerHTML=`<style>:host{display:flex;height:82px;padding-top:1px;box-sizing:border-box;background:#f4f4f4;font:8.800px/9px ${UI};color:#2c2c2c}
.sep{flex:none;width:1px;background:#dcdcdc;height:78px;margin-top:1px}.col{display:flex;flex-direction:column;flex:none}.r{display:flex;align-items:center;height:26.500px}
.lst{width:134px;flex:none}</style>
<div style="width:5px;flex:none"></div>
<sw-rbtn w="30" icon="exit" active box="67" dd>Exit<br>Sketch</sw-rbtn><div style="width:3px;flex:none"></div>
<sw-rbtn w="40" icon="smart" box="67" dd>Smart<br>Dimension</sw-rbtn><div style="width:3px;flex:none"></div><div class="sep"></div>
<div class="col" style="width:140px">
<div class="r">${strip([[286,'line'],[305,'dd'],[323.700,'circ'],[342,'dd'],[361.500,'spline'],[380,'dd'],[398.500,'ghost',.8]],272)}</div>
<div class="r">${strip([[286.500,'rectsel'],[305,'rectdd'],[324,'arc'],[342,'dd'],[361,'ell'],[380,'dd'],[398,'atext']],272)}</div>
<div class="r">${strip([[286,'slot'],[305,'dd'],[323.700,'poly'],[361,'fillet'],[380,'dd'],[398,'point']],272)}</div>
</div><div class="sep"></div>
<sw-rbtn w="34" icon="trim" box="67" dd><u style="text-decoration-thickness:.5px">T</u>rim<br>Entities</sw-rbtn>
<sw-rbtn w="35" icon="conv" box="67" dd>Convert<br>Entities</sw-rbtn>
<sw-rbtn w="34" icon="offset">Offset<br>Entities</sw-rbtn>
<sw-rbtn w="34" icon="offsurf" faded>Offset<br>On<br>Surface</sw-rbtn>
<div class="col lst">
<div class="r">${strip([[563.500,'mirror'],[578,'#',90,'Mirror Entities']],550)}</div>
<div class="r">${strip([[564,'lpat'],[578,'#',90,'Linear Sketch Pattern'],[675,'dd']],550)}</div>
<div class="r">${strip([[564,'move'],[578,'#',90,'Move Entities'],[675,'dd']],550)}</div>
</div><div class="sep"></div>
<sw-rbtn w="58" icon="disp" box="67" dd>Display/Delete<br>Relations</sw-rbtn>
<sw-rbtn w="31" icon="repair">Repair<br>Sketch</sw-rbtn><div class="sep"></div>
<sw-rbtn w="32" icon="snaps" box="67" dd>Quick<br>Snaps</sw-rbtn><div class="sep"></div>
<sw-rbtn w="31" icon="rapid">Rapid<br>Sketch</sw-rbtn>
<sw-rbtn w="42" icon="i2d">Instant2D</sw-rbtn>
<sw-rbtn w="41" icon="shaded" active>Shaded<br>Sketch<br>Contours</sw-rbtn>
<div style="flex:1;display:flex;justify-content:flex-end;align-items:flex-end;padding:0 10px 10px 0"><sw-icon name="up"></sw-icon></div>`}}
customElements.define('sw-ribbon',SwRibbon);

class SwTabs extends HTMLElement{connectedCallback(){const tabs=[['Features',39],['Sketch',40,1],['Direct Editing',61],['Evaluate',42]];
this.attachShadow({mode:'open'}).innerHTML=`<style>:host{display:flex;height:18px;background:#fff;border-top:1px solid #a5a5a5;box-sizing:border-box;position:relative;z-index:3;font:8.800px ${UI};color:#333}
.t{flex:none;height:17px;display:flex;align-items:center;justify-content:center;background:#e6e6e6;border-right:1px solid #bdbdbd;box-sizing:border-box}.t.a{background:#fff;font-weight:500}.hu{display:flex;align-items:center;height:24px;flex:none;margin-top:3px}</style>
<div style="width:2px;flex:none"></div>${tabs.map(t=>`<div class="t ${t[2]?'a':''}" style="width:${t[1]}px">${t[0]}</div>`).join('')}
<div class="hu">${strip([[532,'wire'],[559.500,'shadedcube'],[586,'zfit'],[613,'zarea'],[640,'prev'],[666,'sect'],[693,'vorient'],[710,'ddw'],[730,'dstyle'],[747,'ddw'],[767,'eye'],[785,'ddw'],[804,'ball'],[831,'appear'],[849,'ddw'],[868,'mon'],[886,'ddw'],[907,'tape'],[965,'wl'],[991,'wr'],[1018,'wm',0,10],[1044,'wrest'],[1072,'wclose']],374)}</div>`}}
customElements.define('sw-tabs',SwTabs);

class SwParam extends HTMLElement{connectedCallback(){this.attachShadow({mode:'open'}).innerHTML=`<style>:host{display:flex;align-items:center;height:22.700px;padding-left:12px;font:8.300px ${UI};color:#9a9a9a}
.ax{width:13px;flex:none;display:flex;align-items:flex-end;font:700 8px "Liberation Sans",sans-serif;color:#222;height:11px}.dot{width:3.500px;height:3.500px;border-radius:50%;border:.8px solid #555;box-sizing:border-box;margin:0 1px 5px 0}.in{width:109px;height:11.500px;line-height:11.500px;background:#d8dada;padding-left:3px;box-sizing:border-box;flex:none;margin-right:3px}</style>
<div class="ax"><span class="dot"></span>${this.getAttribute('axis')}</div><div class="in">${this.getAttribute('value')}</div><sw-icon name="spin"></sw-icon>`}}
customElements.define('sw-param',SwParam);

class SwPanel extends HTMLElement{connectedCallback(){const p=(a,v)=>`<sw-param axis="${a}" value="${v}"></sw-param>`;
this.attachShadow({mode:'open'}).innerHTML=`<style>:host{display:flex;flex-direction:column;flex:none;width:162px;height:512px;background:#f7f8f8;border-right:1px solid #9a9a9a;box-sizing:border-box;font:8.800px ${UI};color:#333;overflow:hidden}
.hd{height:10px;display:flex;align-items:center;justify-content:center;border-bottom:1px solid #e0e0e0;background:#f2f2f2}.hd i{width:3px;height:3px;border-radius:50%;border:.6px solid #aaa}
.tabs{display:flex;height:28px;margin-top:4px;position:relative}.tb{flex:none;width:36.600px;height:26px;margin-top:1px;background:#d2d3d3;border-right:1px solid #bbb;box-sizing:border-box;display:flex;align-items:center;justify-content:center}.tb.a{background:#f7f8f8;height:27px;margin-top:0;border-top:1px solid #ccc}
.nav{position:absolute;right:0;bottom:1px;width:24px;height:11px;background:#fff;display:flex;align-items:center;justify-content:space-around;padding:0 3px;box-sizing:border-box}
.row{display:flex;align-items:center}.div{height:1px;background:#ccc;margin:0 4px}.sec{display:flex;justify-content:space-between;align-items:center;padding:0 7px 0 6px;font-weight:500;color:#555}
.b{width:33px;height:33px;box-sizing:border-box;background:#fff;border:1px solid #ccc;display:flex;align-items:center;justify-content:center;flex:none}.b.a{background:#a9a9a9;border-color:#999}
.rad{width:9px;height:9px;border-radius:50%;border:1px solid #666;background:#fff;box-sizing:border-box;margin-right:3px;flex:none}.rad.a{border:2.500px solid #1565a8}.cb{width:8px;height:8px;background:#cfd1d1;border:1px solid #bbb;box-sizing:border-box;margin-right:3px}</style>
<div class="hd"><i></i></div>
<div class="tabs"><div class="tb" style="margin-left:1px"><sw-icon name="tpart"></sw-icon></div><div class="tb a"><sw-icon name="tpm"></sw-icon></div><div class="tb"><sw-icon name="tcfg"></sw-icon></div><div class="tb"><sw-icon name="tdim"></sw-icon></div><div class="tb" style="width:13px"></div><div class="nav"><sw-icon name="arr" style="transform:scale(-.6,.6)"></sw-icon><sw-icon name="arr" style="transform:scale(.6)"></sw-icon></div></div>
<div class="row" style="height:16px;margin-top:3px;padding:0 10px 0 7px;justify-content:space-between"><span class="row" style="font-weight:700;font-size:8.800px;color:#222"><sw-icon name="trect" style="margin-right:5px"></sw-icon>Rectangle</span><sw-icon name="qhelp"></sw-icon></div>
<div class="row" style="height:20px;padding-left:5px"><sw-icon name="check"></sw-icon></div>
<div class="div" style="margin-top:5px"></div>
<div class="sec" style="height:19px">Rectangle Type<sw-icon name="upg"></sw-icon></div>
<div class="row" style="padding-left:6px;gap:9.500px"><div class="b"><sw-icon name="rt1"></sw-icon></div><div class="b a"><sw-icon name="rt2"></sw-icon></div></div>
<div class="row" style="padding-left:6px;gap:9.500px;margin-top:6px"><div class="b"><sw-icon name="rt3"></sw-icon></div><div class="b"><sw-icon name="rt4"></sw-icon></div><div class="b"><sw-icon name="rt5"></sw-icon></div></div>
<div class="row" style="height:12px;margin-top:6px;padding-left:27px;color:#a5a5a5;font-size:8.500px"><span class="cb"></span>Add construction lines</div>
<div class="row" style="height:11.500px;padding-left:42px;font-size:8.500px;font-weight:500"><span class="rad"></span>From Corners</div>
<div class="row" style="height:12.500px;padding-left:41.500px;font-size:8.500px;font-weight:500"><span class="rad a"></span>From Midpoints</div>
<div class="div" style="margin-top:6px"></div>
<div class="sec" style="height:15px;align-items:flex-start;padding-top:5px;box-sizing:border-box"><span style="margin-top:-1px">Parameters</span><sw-icon name="upg" style="margin-top:2px"></sw-icon></div>
${p('x','129.00')}${p('Y','43.00')}${p('x','129.00')}${p('Y','-34.20615928')}${p('x','-26.6779933')}${p('Y','-34.20615928')}${p('x','-26.6779933')}${p('Y','43.00')}
<div style="height:15.500px;padding-left:6px;font-weight:500;color:#555;line-height:17px">Center Point</div>
${p('x','51.16100335')}${p('Y','4.39692036')}`}}
customElements.define('sw-panel',SwPanel);

class SwTree extends HTMLElement{connectedCallback(){const rows=[[0,'tpart3','Part3 (Default) &lt;&lt;Default...','d'],[1,'tann','Annotations','r'],[1,'tbod','Solid Bodies(8)','d'],[2,'tcube','Revolve1'],[2,'tcube','LPattern1[1]'],[2,'tcube','LPattern1[2]'],[2,'tcube','LPattern1[3]'],[2,'tcube','LPattern1[4]'],[2,'tcube','LPattern1[5]'],[2,'tcube','LPattern1[6]'],[2,'tcube','LPattern1[7]'],[1,'tmat','Material &lt;not specifi...'],[1,'tplane','Front Plane'],[1,'tplane','Top Plane'],[1,'tplane','Right Plane'],[1,'torig','Origin'],[1,'trev','Revolve1','d'],[2,'tsk','Sketch1'],[1,'tlp','LPattern1'],[1,'tsk2','(-) Sketch2']];
const W=[15,31,47],E=[1,18,34];
this.attachShadow({mode:'open'}).innerHTML=`<style>:host{display:block;position:relative;z-index:2;padding-top:1.500px;font:8.800px ${UI};color:#333;width:145px;white-space:nowrap}.r{display:flex;align-items:center;height:15.480px}.w{flex:none;display:flex;align-items:center}.ic{flex:none;width:16px;display:flex;align-items:center}</style>`+rows.map(r=>`<div class="r"><div class="w" style="width:${W[r[0]]}px;padding-left:${E[r[0]]}px;box-sizing:border-box">${r[3]?`<sw-icon name="${r[3]==='d'?'expdn':'exparr'}"></sw-icon>`:''}</div><div class="ic"><sw-icon name="${r[1]}"></sw-icon></div>${r[2]}</div>`).join('')}}
customElements.define('sw-tree',SwTree);

class SwViewport extends HTMLElement{connectedCallback(){
const cx=[503.700,647,790,933.500],cy=[307.300,450.400];let clips='',uses='';
for(const y of cy)for(const x of cx){clips+=`<circle cx="${x}" cy="${y}" r="64.700"/>`;uses+=`<use href="#disc" x="${x}" y="${y}"/>`}
const pl=(x,y)=>`<path d="M${x-3} ${y}h6M${x} ${y-3}v6" stroke="#222" stroke-width=".9"/>`;
const panes=['pHome','pLib','pFold','pVP','pApp','pCP','pChat'];
this.attachShadow({mode:'open'}).innerHTML=`<style>:host{display:block;position:relative;flex:1;height:512px;background:#fff;overflow:hidden;font:8.800px ${UI}}
svg.c{position:absolute;left:0;top:0}.tp{position:absolute;right:0;top:27px;width:28px;background:#c9c9c9;border-left:1px solid #b0b0b0;border-top:1px solid #b0b0b0;border-bottom:1px solid #b0b0b0;z-index:2}.tp div{height:25.300px;box-sizing:border-box;display:flex;align-items:center;justify-content:center;border-bottom:1px solid #b2b2b2}.tp div.a{background:#fff}
.lbl{position:absolute;left:7px;top:498px;font:700 9px "Liberation Sans",sans-serif;color:#222}</style>
<svg class="c" width="738" height="512" viewBox="352 133 738 512">
<defs>
<linearGradient id="g1" x1=".2" y1="0" x2=".65" y2="1"><stop offset="0" stop-color="#575b90"/><stop offset=".55" stop-color="#6a6ea4"/><stop offset="1" stop-color="#8084b6"/></linearGradient>
<linearGradient id="g2" x1=".4" y1="0" x2=".6" y2="1"><stop offset="0" stop-color="#42467a"/><stop offset=".6" stop-color="#52568d"/><stop offset="1" stop-color="#5e6299"/></linearGradient>
<linearGradient id="g3" x1=".35" y1="0" x2=".7" y2="1"><stop offset="0" stop-color="#4e5286"/><stop offset=".55" stop-color="#62669f"/><stop offset="1" stop-color="#7478b0"/></linearGradient>
<radialGradient id="g4" gradientUnits="userSpaceOnUse" cx="0" cy="0" r="65"><stop offset=".85" stop-color="#fff" stop-opacity="0"/><stop offset=".97" stop-color="#fff" stop-opacity=".14"/><stop offset="1" stop-color="#222" stop-opacity=".1"/></radialGradient>
<filter id="bl" x="-40%" y="-40%" width="180%" height="180%"><feGaussianBlur stdDeviation="2.800"/></filter>
<g id="disc">
<circle r="64.700" fill="url(#g1)"/><circle r="64.700" fill="url(#g4)"/>
<circle r="55" fill="url(#g2)"/>
<circle r="43.800" fill="url(#g3)"/>
<path d="M34 14A37 37 0 0 1 8 35" fill="none" stroke="#a0a4d2" stroke-width="6" stroke-linecap="round" filter="url(#bl)" opacity=".55"/>
<path d="M-36 -6A37 37 0 0 0 -32 14" fill="none" stroke="#8f93c8" stroke-width="5" stroke-linecap="round" filter="url(#bl)" opacity=".5"/>
<circle r="28.800" fill="#62669f"/>
<circle r="64.700" fill="none" stroke="#0c0c14" stroke-width="1.400"/>
<g fill="none" stroke="#0b0c38" stroke-width="1"><circle r="55"/><circle r="43.800"/><circle r="28.800"/></g>
</g>
<clipPath id="cp">${clips}</clipPath>
</defs>
<path d="M983 153h20M983 153v16c0 5 3 8 9 8h12" fill="none" stroke="#dde4e5" stroke-width="2"/><path d="M1028 168c-1 7-7 11-14 11l1 7-10-9 10-8v5c5 0 10-2 13-6z" fill="#cfe3ea"/>
<path d="M1033 188l8 6 8-6 3 3-6 7 6 6-3 3-8-6-8 6-3-3 6-6-6-7z" fill="#f0c8c8"/>
${uses}
${pl(503.700,307.300)}${pl(647,307.300)}${pl(933.500,307.300)}${pl(790,450.400)}${pl(933.500,450.400)}
<g fill="none" stroke-width="1">
<path d="M459.500 251.500H978.500V507.500" stroke="#8b8aa8"/>
<path d="M459.500 251.500V507.500H978.500" stroke="#6a62c4"/>
<path d="M459.500 251.500H978.500V507.500H459.500Z" stroke="#3b34c0" clip-path="url(#cp)" opacity=".85"/>
<path d="M718.500 252V507" stroke="#8a8aa0" stroke-dasharray="2 2"/>
<path d="M460 378.500H978" stroke="#8a7fc4" stroke-dasharray="2 2"/>
<path d="M693 404L744 353" stroke="#d65ad6" stroke-dasharray="9 3 2 3"/>
</g>
<path d="M647 450.400L693 404.400" stroke="#c651c9" stroke-width="2"/><path d="M790 307.300L744 353.300" stroke="#c651c9" stroke-width="2"/>
<g fill="#ef9fe6" stroke="#a010a8" stroke-width="1.100"><rect x="644.500" y="447.900" width="5" height="5"/><rect x="787.500" y="304.800" width="5" height="5"/></g>
<g stroke="#d82828" fill="#d82828"><path d="M503.700 450.400V432" stroke-width="1.200"/><path d="M503.700 450.400H514" stroke-width="1.200"/><path d="M501 435l2.700-7 2.700 7zM512 447.700l6 2.700-6 2.700z" stroke="none"/><circle cx="503.700" cy="450.400" r="1.500" stroke="none"/></g>
<circle cx="459.500" cy="507.500" r="6.300" fill="none" stroke="#4a3cc8" stroke-width="2.600"/>
<path d="M462 510l10 10.500 1.500-1.500-10-10.500-3-1z" fill="#e8cb55" stroke="#333" stroke-width=".8"/>
<rect x="459.500" y="520.500" width="9" height="7.500" fill="#cfe3ea" stroke="#4a6a76"/><rect x="463" y="523" width="2" height="2" fill="#fff" stroke="#333" stroke-width=".6"/>
<text x="470" y="507.500" font-family="Roboto" font-size="9" fill="#2a2a5a" opacity=".85" textLength="93">x = 811.26, y = 154.41</text>
<g><path d="M380.500 601.500H396" stroke="#b31818" stroke-width="2"/><path d="M395 598.500l5 3-5 3z" fill="#b31818"/><path d="M380.500 601.500V619" stroke="#141c6e" stroke-width="2"/><path d="M377.500 618l3 6 3-6z" fill="#141c6e"/><circle cx="380.500" cy="601.500" r="1.200" fill="#2c8c2c"/></g>
<text x="403" y="603" font-family="Roboto" font-size="6" fill="#c44">X</text>
<text x="378.500" y="631" font-family="Roboto" font-size="4.500" fill="#446">Z</text>
</svg>
<sw-tree></sw-tree>
<div class="lbl">*Top</div>
<div class="tp">${panes.map((n,i)=>`<div class="${i===4?'a':''}"><sw-icon name="${n}"></sw-icon></div>`).join('')}</div>`}}
customElements.define('sw-viewport',SwViewport);

class SwFilterbar extends HTMLElement{connectedCallback(){this.attachShadow({mode:'open'}).innerHTML=`<style>:host{display:flex;align-items:center;height:28px;background:#f5f5f5;border-bottom:1px solid #a8a8a8;box-sizing:border-box}</style>`+strip([[208,'ffun1'],[237,'ffun2'],[264,'ffun3'],[290,'cursor'],[310,'dd'],[328,'cursorf'],[344.500,'sep'],[363,'ga'],[389.500,'fsel1'],[417,'gb'],[443,'gc'],[470,'gd'],[498.500,'fsel2'],[523,'ge'],[553,'gf'],[582,'fsel3'],[608.500,'fsel4'],[637,'gn'],[662,'gg'],[690,'gh'],[717,'gi'],[747,'gj'],[776,'gk'],[800,'gl'],[825,'gm'],[855,'gn'],[882,'go'],[910,'gp'],[937,'gq'],[965,'gr'],[992,'gs'],[1023,'gt'],[1048,'gt'],[1079,'chev']],190)}}
customElements.define('sw-filterbar',SwFilterbar);

class SwStatus extends HTMLElement{connectedCallback(){this.attachShadow({mode:'open'}).innerHTML=`<style>:host{display:flex;align-items:center;height:14px;background:#fff;font:9px ${UI};color:#333}</style>`+strip([[191,'#',200,'SOLIDWORKS Student Edition - Academic Use Only'],[674,'#',44,'-26.68mm'],[727,'#',40,'-34.21mm'],[775,'#',24,'0mm'],[809,'#',55,'Fully Defined'],[870,'#',70,'Editing Sketch2'],[1015,'#',30,'MMGS'],[1056,'ddw'],[1082,'fstat']],190)}}
customElements.define('sw-status',SwStatus);

class SwTaskbar extends HTMLElement{connectedCallback(){
this.attachShadow({mode:'open'}).innerHTML=`<style>:host{display:flex;align-items:center;height:33px;background:#1c1c1c;font:9px ${UI};color:#eee;position:relative}
.s{display:flex;align-items:center;height:22px;background:#3a3a3a;border-radius:11px;font-size:10px;color:#d6d6d6;box-sizing:border-box;padding:0 2px 0 8px}.s span{flex:1;margin-left:6px}.clock{text-align:right;font-size:9px;line-height:13px}.u{position:absolute;bottom:2px;height:2px;border-radius:1px;background:#9a9a9a;width:4px}</style>`+strip([[351,'win'],[369,'#',153,'<div class="s"><sw-icon name="smag"></sw-icon><span>Search</span><sw-icon name="doodle"></sw-icon></div>'],[541,'task'],[571,'t1'],[602,'t2'],[633,'edge'],[664,'fold'],[695,'outl'],[726,'swapp'],[757,'t1'],[787,'acro'],[818,'ppt'],[886,'caret'],[909,'tdb'],[931,'tcl'],[953,'tms'],[976,'tmic'],[998,'tnet'],[1015,'tvol'],[1030,'#',47,'<div class="clock">10:00 AM<br>11/28/2025</div>']],190)+[[664],[695],[757],[787],[818]].map(a=>`<i class="u" style="left:${a[0]-192}px"></i>`).join('')+`<i class="u" style="left:${726-196}px;width:12px;background:#6cc0ea"></i>`}}
customElements.define('sw-taskbar',SwTaskbar);

class SwApp extends HTMLElement{connectedCallback(){this.attachShadow({mode:'open'}).innerHTML=`<style>:host{display:flex;flex-direction:column;width:900px;height:720px;margin:0 auto;background:#fff;overflow:hidden}.m{display:flex;height:512px}</style>
<sw-titlebar></sw-titlebar><sw-ribbon></sw-ribbon><sw-tabs></sw-tabs><div class="m"><sw-panel></sw-panel><sw-viewport></sw-viewport></div><sw-filterbar></sw-filterbar><sw-status></sw-status><sw-taskbar></sw-taskbar>`}}
customElements.define('sw-app',SwApp);
</script></body></html>
